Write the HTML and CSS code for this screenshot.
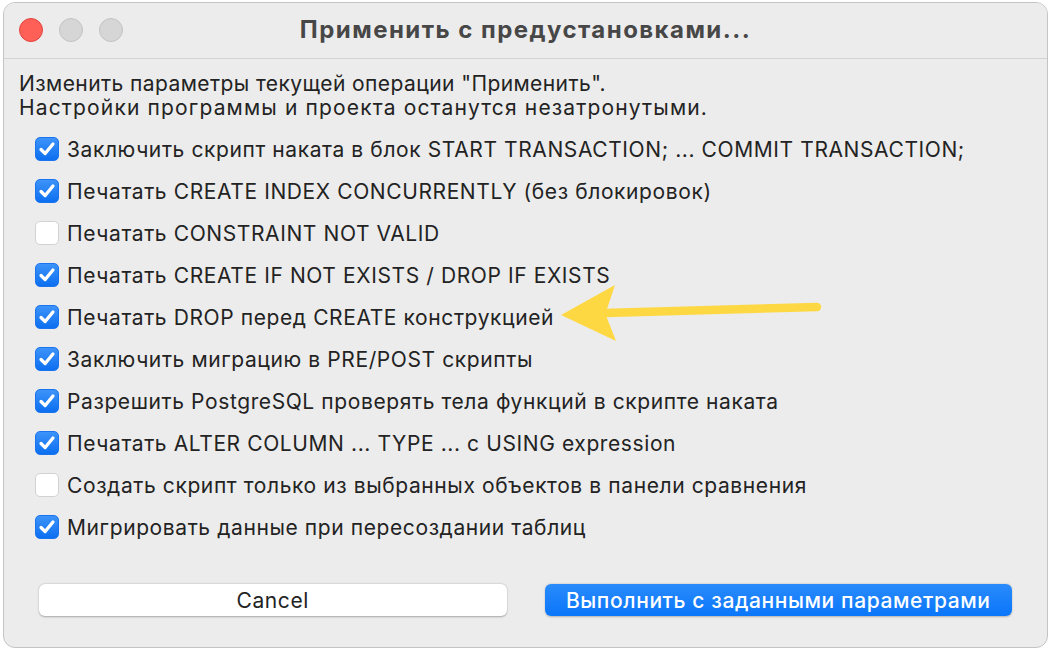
FILE: index.html
```html
<!DOCTYPE html>
<html lang="ru">
<head>
<meta charset="utf-8">
<link rel="stylesheet" href="styles.css">
</head>
<body>
<div class="window">
  <div class="titlebar">
    <div class="lights">
      <span class="light red"></span>
      <span class="light gray"></span>
      <span class="light gray"></span>
    </div>
    <div class="title">Применить с предустановками...</div>
  </div>
  <div class="content">
    <p class="intro"><span class="line-a">Изменить параметры текущей операции "Применить".</span><br><span class="line-b">Настройки программы и проекта останутся незатронутыми.</span></p>
    <ul class="options">
      <li class="option"><span class="box checked"><svg viewBox="0 0 24 24"><polyline points="5.5,12.5 10,17 18.5,6.5"/></svg></span>Заключить скрипт наката в блок START TRANSACTION; ... COMMIT TRANSACTION;</li>
      <li class="option"><span class="box checked"><svg viewBox="0 0 24 24"><polyline points="5.5,12.5 10,17 18.5,6.5"/></svg></span>Печатать CREATE INDEX CONCURRENTLY (без блокировок)</li>
      <li class="option"><span class="box"></span>Печатать CONSTRAINT NOT VALID</li>
      <li class="option"><span class="box checked"><svg viewBox="0 0 24 24"><polyline points="5.5,12.5 10,17 18.5,6.5"/></svg></span>Печатать CREATE IF NOT EXISTS / DROP IF EXISTS</li>
      <li class="option"><span class="box checked"><svg viewBox="0 0 24 24"><polyline points="5.5,12.5 10,17 18.5,6.5"/></svg></span>Печатать DROP перед CREATE конструкцией</li>
      <li class="option"><span class="box checked"><svg viewBox="0 0 24 24"><polyline points="5.5,12.5 10,17 18.5,6.5"/></svg></span>Заключить миграцию в PRE/POST скрипты</li>
      <li class="option"><span class="box checked"><svg viewBox="0 0 24 24"><polyline points="5.5,12.5 10,17 18.5,6.5"/></svg></span>Разрешить PostgreSQL проверять тела функций в скрипте наката</li>
      <li class="option"><span class="box checked"><svg viewBox="0 0 24 24"><polyline points="5.5,12.5 10,17 18.5,6.5"/></svg></span>Печатать ALTER COLUMN ... TYPE ... с USING expression</li>
      <li class="option"><span class="box"></span>Создать скрипт только из выбранных объектов в панели сравнения</li>
      <li class="option"><span class="box checked"><svg viewBox="0 0 24 24"><polyline points="5.5,12.5 10,17 18.5,6.5"/></svg></span>Мигрировать данные при пересоздании таблиц</li>
    </ul>
    <div class="buttons">
      <button class="btn cancel">Cancel</button>
      <button class="btn primary">Выполнить с заданными параметрами</button>
    </div>
    <svg class="arrow" viewBox="0 0 270 60" width="270" height="60">
      <line x1="44" y1="28" x2="256" y2="22" class="shaft"/>
      <polygon points="0,30 54,0 45,27 46,33 55,56" class="head"/>
    </svg>
  </div>
</div>
</body>
</html>
```
FILE: styles.css
```css
* { box-sizing: border-box; }
html, body { margin: 0; padding: 0; }
body {
  width: 1052px;
  height: 650px;
  overflow: hidden;
  background: #ffffff;
  font-family: "Inter", "Noto Sans", sans-serif;
  color: #232323;
}
.window {
  position: relative;
  margin: 2px 4px 0 3px;
  width: 1045px;
  height: 646px;
  background: #ececec;
  border: 1px solid #c4c4c4;
  border-radius: 12px;
  overflow: hidden;
}
.titlebar {
  position: relative;
  height: 56px;
  display: flex;
  align-items: center;
  justify-content: center;
  border-bottom: 1px solid #d3d3d3;
  background: #ececec;
}
.lights {
  position: absolute;
  left: 15px;
  top: 15px;
  display: flex;
  gap: 16px;
}
.light {
  width: 24px;
  height: 24px;
  border-radius: 50%;
  display: block;
}
.light.red { background: #fe5f57; border: 1px solid #e2463f; }
.light.gray { background: #d6d6d6; border: 1px solid #c3c3c3; }
.title {
  font-size: 24px;
  font-weight: 700;
  color: #474747;
  letter-spacing: 1.45px;
  margin-top: -2px;
}
.content {
  position: relative;
  padding: 13px 35px 0 15px;
}
.intro {
  margin: 0;
  font-size: 21px;
  line-height: 24px;
}
.line-a { letter-spacing: 0.42px; }
.line-b { letter-spacing: 1.15px; }
.options {
  list-style: none;
  margin: 8px 0 0 0;
  padding: 0 0 0 16px;
}
.option {
  height: 42px;
  display: flex;
  align-items: center;
  gap: 8px;
  font-size: 21px;
  letter-spacing: 0.6px;
}
.box {
  width: 24px;
  height: 24px;
  flex: none;
  border-radius: 5px;
  background: #ffffff;
  border: 1px solid #d2d2d2;
  display: flex;
}
.box.checked {
  background: linear-gradient(#3d93f9, #0c6ff0);
  border: 1px solid #1a74ef;
}
.box svg { width: 22px; height: 22px; }
.box polyline {
  fill: none;
  stroke: #ffffff;
  stroke-width: 3.6;
  stroke-linecap: round;
  stroke-linejoin: round;
}
.buttons {
  display: flex;
  gap: 38px;
  margin-top: 36px;
  padding-left: 20px;
}
.btn {
  width: 468px;
  height: 32px;
  border-radius: 6px;
  font-family: inherit;
  font-size: 21px;
  letter-spacing: 0.6px;
  padding: 0;
}
.cancel {
  background: #ffffff;
  color: #232323;
  border: none;
  box-shadow: 0 0.5px 2px rgba(0,0,0,0.3);
}
.primary {
  background: linear-gradient(#2a8bfb, #0a76fa);
  color: #ffffff;
  border: none;
  font-weight: 500;
  box-shadow: 0 0.5px 2px rgba(0,0,0,0.25);
}
.arrow {
  position: absolute;
  left: 557px;
  top: 226px;
}
.shaft {
  stroke: #fed843;
  stroke-width: 8.5;
  stroke-linecap: round;
}
.head { fill: #fed843; }
```
